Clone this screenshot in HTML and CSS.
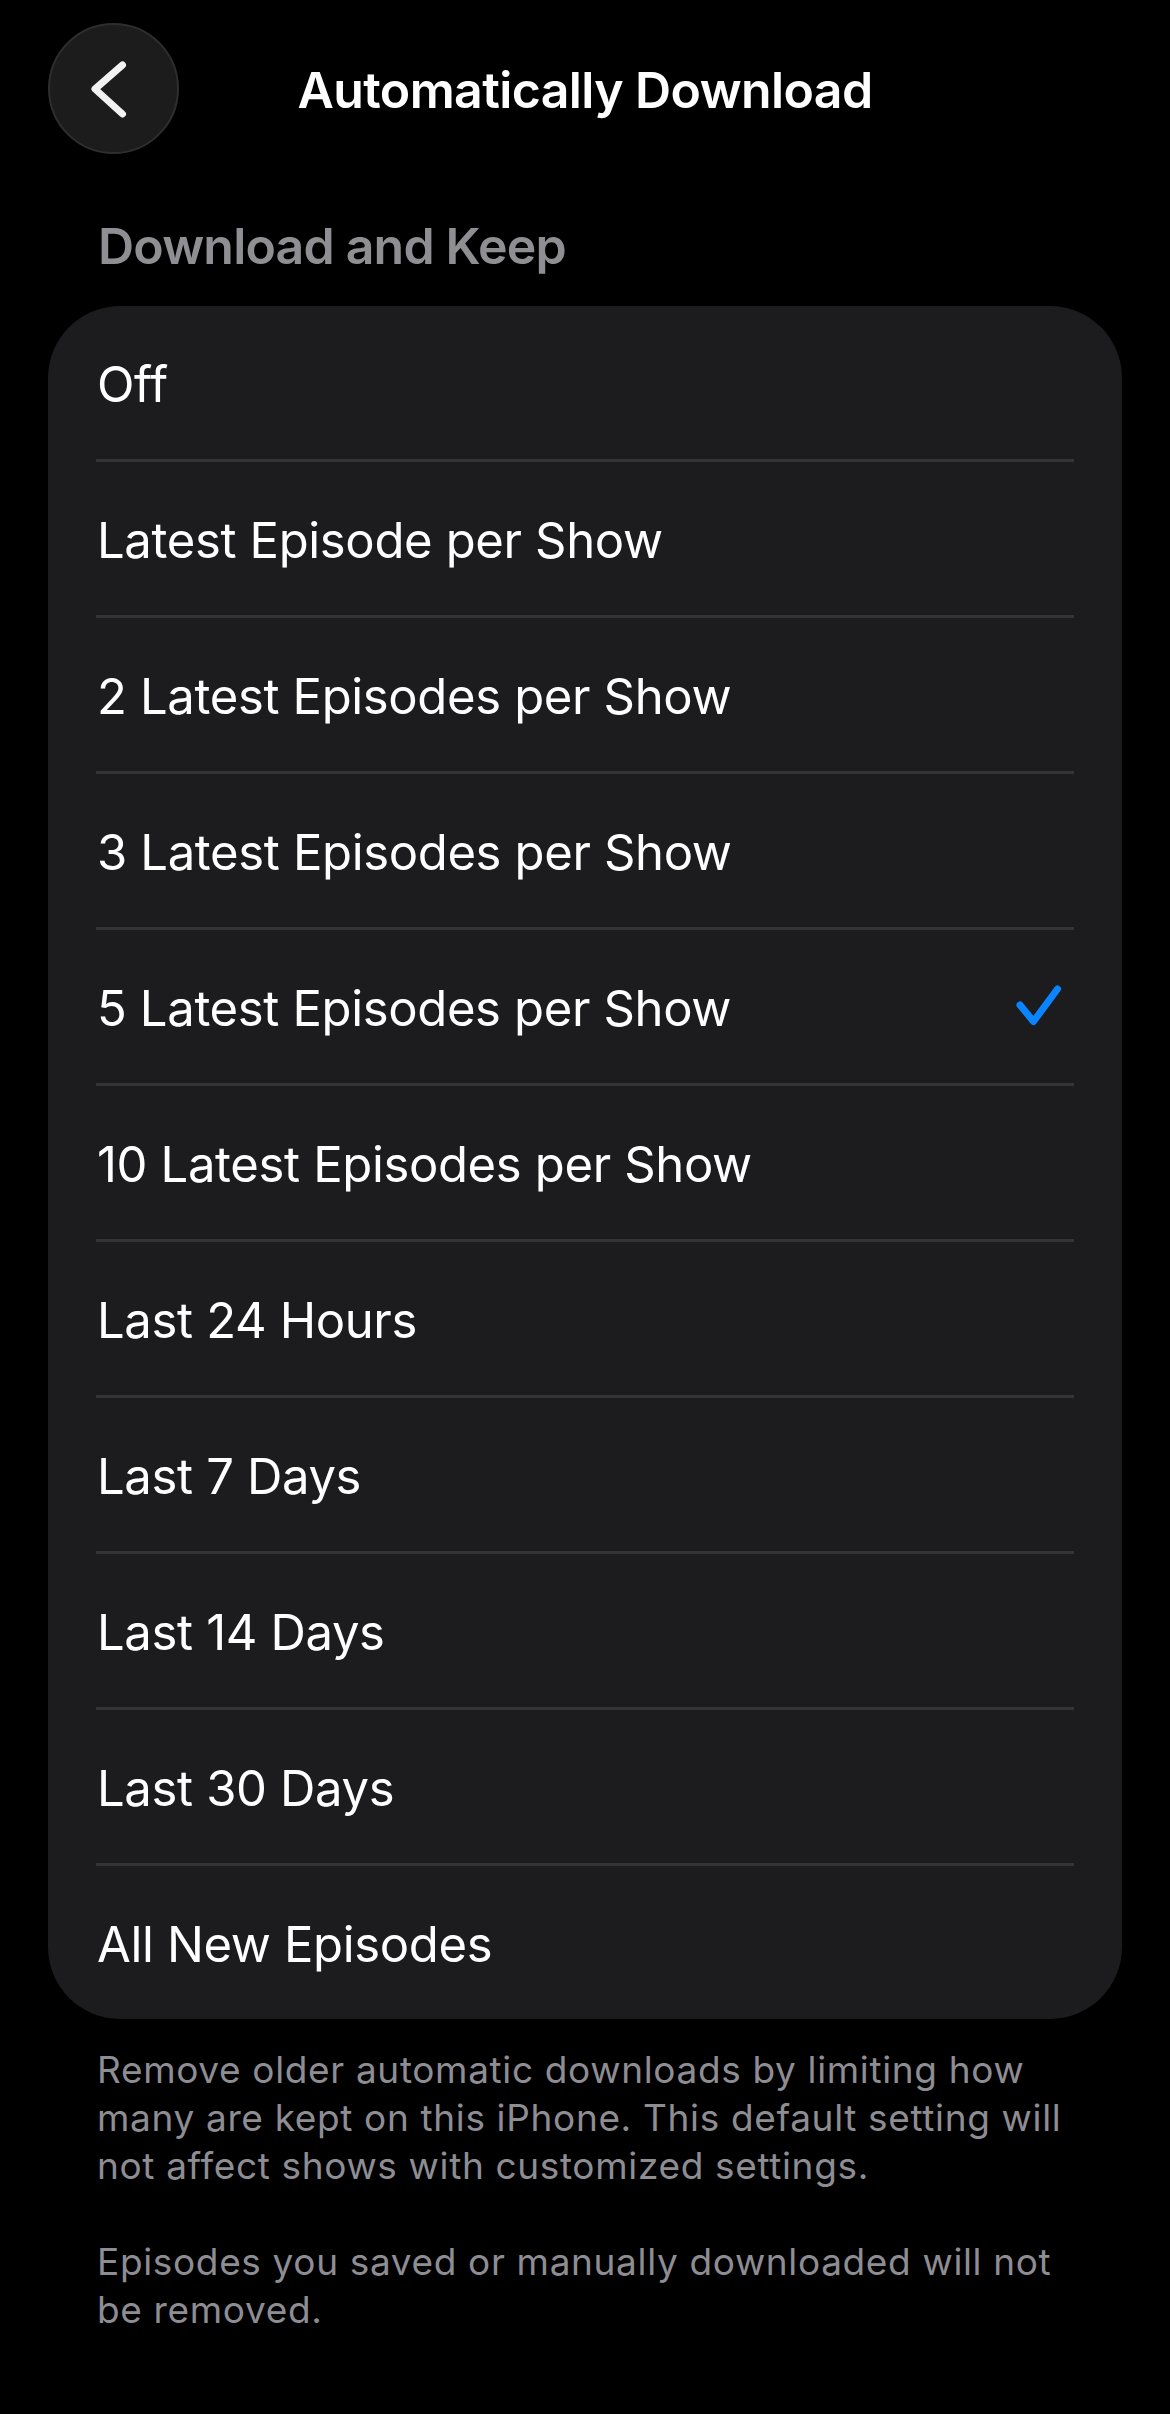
FILE: index.html
```html
<!DOCTYPE html>
<html lang="en">
<head>
<meta charset="utf-8">
<title>Automatically Download</title>
<link rel="stylesheet" href="styles.css">
</head>
<body>
<div class="screen">
  <header class="nav">
    <button class="back" aria-label="Back">
      <svg width="131" height="131" viewBox="0 0 131 131" aria-hidden="true">
        <polyline points="74.5,42 47,66 74.5,91" fill="none" stroke="#f2f2f2" stroke-width="7" stroke-linecap="round" stroke-linejoin="round"/>
      </svg>
    </button>
    <h1 class="title">Automatically Download</h1>
    <span class="nav-spacer"></span>
  </header>

  <main class="content">
    <h2 class="section-title">Download and Keep</h2>
    <ul class="list">
      <li class="row"><span class="row-label">Off</span></li>
      <li class="row"><span class="row-label">Latest Episode per Show</span></li>
      <li class="row"><span class="row-label">2 Latest Episodes per Show</span></li>
      <li class="row"><span class="row-label">3 Latest Episodes per Show</span></li>
      <li class="row selected"><span class="row-label">5 Latest Episodes per Show</span>
        <svg class="check" width="46" height="44" viewBox="0 0 46 44" aria-hidden="true">
          <polyline points="4,20 17.5,36.5 41.5,4" fill="none" stroke="#0a84ff" stroke-width="7" stroke-linecap="round" stroke-linejoin="round"/>
        </svg>
      </li>
      <li class="row"><span class="row-label">10 Latest Episodes per Show</span></li>
      <li class="row"><span class="row-label">Last 24 Hours</span></li>
      <li class="row"><span class="row-label">Last 7 Days</span></li>
      <li class="row"><span class="row-label">Last 14 Days</span></li>
      <li class="row"><span class="row-label">Last 30 Days</span></li>
      <li class="row"><span class="row-label">All New Episodes</span></li>
    </ul>
    <div class="footer">
      <p>Remove older automatic downloads by limiting how many are kept on this iPhone. This default setting will not affect shows with customized settings.</p>
      <p>Episodes you saved or manually downloaded will not be removed.</p>
    </div>
  </main>
</div>
</body>
</html>
```

FILE: styles.css
```css
html, body {
  margin: 0;
  padding: 0;
  background: #000;
}

body {
  font-family: Inter, "Noto Sans", "Liberation Sans", sans-serif;
  color: #fff;
  -webkit-font-smoothing: antialiased;
}

.screen {
  width: 1170px;
  min-height: 2414px;
}

.nav {
  display: grid;
  grid-template-columns: 1fr auto 1fr;
  align-items: center;
  padding: 23px 48px 0;
  height: 131px;
}

.back {
  width: 131px;
  height: 131px;
  padding: 0;
  margin: 0;
  border-radius: 50%;
  background: #1c1c1c;
  border: 2px solid #2e2e2e;
  box-sizing: border-box;
  display: flex;
  align-items: center;
  justify-content: center;
  justify-self: start;
}

.back svg {
  display: block;
  margin: -2px;
}

.title {
  margin: 0;
  font-size: 50px;
  font-weight: 600;
  line-height: 62px;
  letter-spacing: -0.6px;
  color: #fff;
  position: relative;
  top: 1px;
}

.content {
  padding: 0 48px;
}

.section-title {
  margin: 61px 0 29px;
  padding-left: 50px;
  font-size: 50px;
  font-weight: 600;
  line-height: 62px;
  letter-spacing: -0.8px;
  color: #8e8e93;
}

.list {
  list-style: none;
  margin: 0;
  padding: 0 48px;
  background: #1c1c1e;
  border-radius: 72px;
}

.row {
  height: 156px;
  box-sizing: border-box;
  border-bottom: 3px solid #343436;
  display: flex;
  align-items: center;
  justify-content: space-between;
  padding: 0 12px 0 1px;
}

.row:last-child {
  border-bottom: none;
  height: 153px;
}

.row-label {
  font-size: 49px;
  font-weight: 400;
  letter-spacing: -0.35px;
  color: #fff;
  position: relative;
  top: 2px;
}

.check {
  display: block;
}

.footer {
  padding: 27px 50px 0 49px;
  color: #8d8d93;
  font-size: 37px;
  line-height: 48px;
  letter-spacing: 0.65px;
}

.footer p {
  margin: 0 0 48px;
}
```
